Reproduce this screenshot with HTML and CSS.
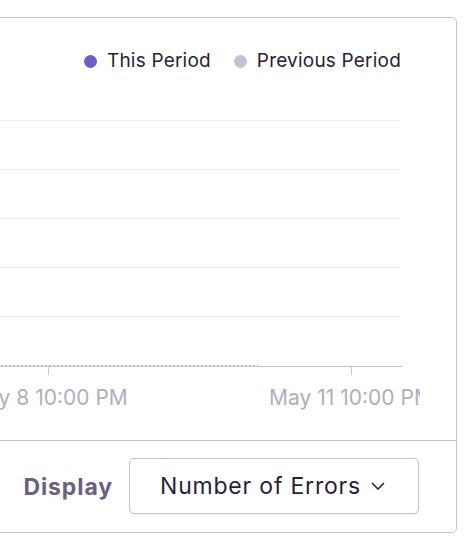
FILE: index.html
```html
<!DOCTYPE html>
<html lang="en">
<head>
  <meta charset="UTF-8" />
  <title>Errors chart</title>
  <link rel="stylesheet" href="styles.css">
</head>
<body>
  <div class="card">
    <div class="legend">
      <span class="legend-item"><span class="dot dot-current"></span>This Period</span>
      <span class="legend-item"><span class="dot dot-previous"></span>Previous Period</span>
    </div>

    <svg class="chart" width="439" height="320" viewBox="0 0 439 320">
      <g class="grid">
        <line x1="0" y1="20.5" x2="419" y2="20.5" />
        <line x1="0" y1="69.5" x2="419" y2="69.5" />
        <line x1="0" y1="118.5" x2="419" y2="118.5" />
        <line x1="0" y1="167.5" x2="419" y2="167.5" />
        <line x1="0" y1="216.5" x2="419" y2="216.5" />
      </g>
      <line class="series-prev" x1="0" y1="265.5" x2="277" y2="265.5" />
      <line class="axis" x1="0" y1="266.5" x2="421" y2="266.5" />
      <line class="axis" x1="67.5" y1="266.5" x2="67.5" y2="275" />
      <line class="axis" x1="370.5" y1="266.5" x2="370.5" y2="275" />
      <text class="axis-label" x="67" y="305">May 8 10:00 PM</text>
      <text class="axis-label" x="370" y="305">May 11 10:00 PM</text>
    </svg>

    <div class="footer">
      <span class="footer-label">Display</span>
      <button class="select">
        Number of Errors
        <svg class="chevron" width="14" height="8" viewBox="0 0 14 8">
          <path d="M1 1 L7 7 L13 1" />
        </svg>
      </button>
    </div>
  </div>
</body>
</html>
```

FILE: styles.css
```css
body {
  margin: 0;
  background-color: #fff;
  font-family: Inter, "Noto Sans", sans-serif;
  color: #2b1d38;
  overflow: hidden;
}

.card {
  margin: 17px 0 0 -20px;
  width: 477px;
  height: 516px;
  box-sizing: border-box;
  border: 1px solid #c6c2cc;
  border-radius: 5px;
  display: flex;
  flex-direction: column;
}

.legend {
  display: flex;
  justify-content: flex-end;
  gap: 23px;
  padding: 31px 55px 0 0;
  font-size: 19px;
  line-height: 24px;
  letter-spacing: 0.2px;
}

.legend-item {
  display: flex;
  align-items: center;
  gap: 10px;
}

.dot {
  width: 13px;
  height: 13px;
  border-radius: 50%;
}

.dot-current {
  background-color: #6c5fc7;
}

.dot-previous {
  background-color: #c6c0d1;
}

.chart {
  display: block;
  margin-top: 27px;
}

.grid line {
  stroke: #f1eff3;
  stroke-width: 1;
}

.axis {
  stroke: #c6c2cc;
  stroke-width: 1;
}

.series-prev {
  stroke: #b9b3c3;
  stroke-width: 1;
  stroke-dasharray: 2 2;
}

.axis-label {
  font-family: Inter, "Noto Sans", sans-serif;
  font-size: 21px;
  fill: #b3adbc;
  text-anchor: middle;
}

.footer {
  margin-top: 20px;
  border-top: 1px solid #c6c2cc;
  flex: 1;
  display: flex;
  justify-content: flex-end;
  align-items: flex-start;
  gap: 16px;
  padding: 17px 37px 0 0;
}

.footer-label {
  font-size: 23px;
  font-weight: 700;
  letter-spacing: 0.9px;
  color: #6c5f80;
  line-height: 58px;
}

.select {
  display: flex;
  align-items: center;
  gap: 10px;
  height: 56px;
  width: 290px;
  padding: 0 0 0 30px;
  box-sizing: border-box;
  background-color: #fff;
  border: 1px solid #c6c2cc;
  border-radius: 5px;
  font-family: Inter, "Noto Sans", sans-serif;
  font-size: 23px;
  letter-spacing: 0.8px;
  color: #2b1d38;
  box-shadow: 0 2px 2px rgba(43, 29, 56, 0.05);
}

.chevron path {
  fill: none;
  stroke: #2b1d38;
  stroke-width: 1.5;
}
```
